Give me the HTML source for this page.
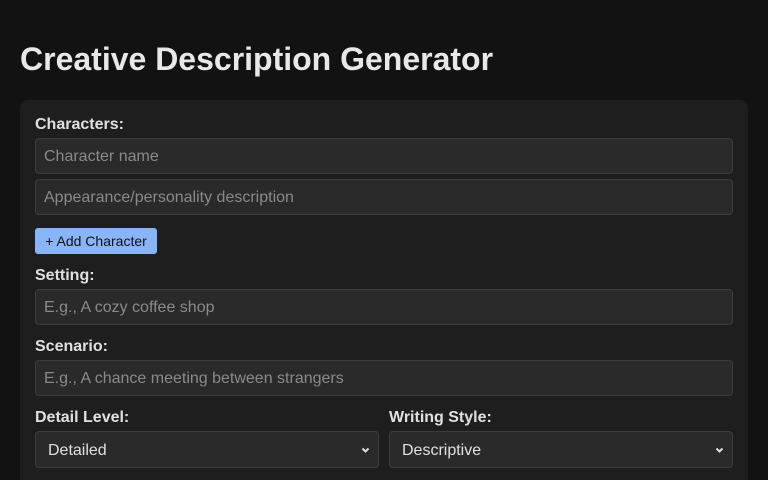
<!DOCTYPE html>
<html><head><style>
html,body{margin:0;height:480px;overflow:hidden}
body{background:#121212;width:768px;font-family:"Liberation Sans",sans-serif;color:#e0e0e0;position:relative}
.a{position:absolute}
h1{position:absolute;left:20px;top:40px;margin:0;font-size:32px;line-height:38px;font-weight:bold;color:#e8e8e8}
.card{left:20px;top:100px;width:728px;height:380px;background:#1e1e1e;border-radius:8px 8px 0 0}
.l{font-size:16px;font-weight:bold;line-height:18px;color:#e0e0e0}
.i{background:#2a2a2a;border:1px solid #3c3c3c;border-radius:4px;box-sizing:border-box;font-size:16px;color:#8a8a8a;padding-left:8px;padding-top:2px;display:flex;align-items:center}
.s{color:#e0e0e0;padding-left:12px}
.s svg{position:absolute;right:8px;top:15px}
.b{left:35px;top:228px;width:122px;height:26px;background:#8ab4f8;border-radius:3px;color:#111;font-size:14px;display:flex;align-items:center;justify-content:center}
</style></head><body>
<h1>Creative Description Generator</h1>
<div class="a card"></div>
<div class="a l" style="left:35px;top:116px">Characters:</div>
<div class="a i" style="left:35px;top:138px;width:698px;height:36px">Character name</div>
<div class="a i" style="left:35px;top:179px;width:698px;height:36px">Appearance/personality description</div>
<div class="a b">+ Add Character</div>
<div class="a l" style="left:35px;top:267px">Setting:</div>
<div class="a i" style="left:35px;top:289px;width:698px;height:36px">E.g., A cozy coffee shop</div>
<div class="a l" style="left:35px;top:338px">Scenario:</div>
<div class="a i" style="left:35px;top:360px;width:698px;height:36px">E.g., A chance meeting between strangers</div>
<div class="a l" style="left:35px;top:409px">Detail Level:</div>
<div class="a l" style="left:389px;top:409px">Writing Style:</div>
<div class="a i s" style="left:35px;top:431px;width:344px;height:37px">Detailed<svg width="9" height="6" viewBox="0 0 9 6"><path d="M1.5 1.5L4.5 4.5L7.5 1.5" stroke="#e0e0e0" stroke-width="2" fill="none"/></svg></div>
<div class="a i s" style="left:389px;top:431px;width:344px;height:37px">Descriptive<svg width="9" height="6" viewBox="0 0 9 6"><path d="M1.5 1.5L4.5 4.5L7.5 1.5" stroke="#e0e0e0" stroke-width="2" fill="none"/></svg></div>
</body></html>
